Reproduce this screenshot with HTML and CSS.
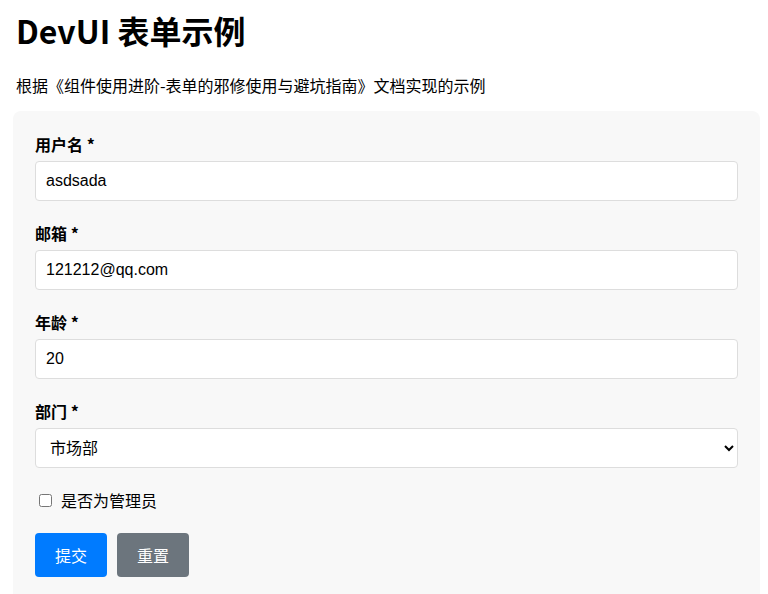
FILE: index.html
```html
<!DOCTYPE html>
<html lang="zh-CN">
<head>
<meta charset="utf-8">
<title>DevUI 表单示例</title>
<link rel="stylesheet" href="styles.css">
</head>
<body>
<div class="page">
  <h1 class="title">DevUI 表单示例</h1>
  <p class="subtitle">根据《组件使用进阶-表单的邪修使用与避坑指南》文档实现的示例</p>
  <form class="form">
    <div class="group">
      <label class="label" for="username">用户名 *</label>
      <input class="control" id="username" type="text" value="asdsada">
    </div>
    <div class="group">
      <label class="label" for="email">邮箱 *</label>
      <input class="control" id="email" type="email" value="121212@qq.com">
    </div>
    <div class="group">
      <label class="label" for="age">年龄 *</label>
      <input class="control" id="age" type="text" value="20">
    </div>
    <div class="group">
      <label class="label" for="dept">部门 *</label>
      <select class="control select" id="dept">
        <option>市场部</option>
        <option>技术部</option>
        <option>销售部</option>
      </select>
    </div>
    <div class="group check-row">
      <input class="check" id="admin" type="checkbox">
      <label class="check-label" for="admin">是否为管理员</label>
    </div>
    <div class="actions">
      <button class="btn btn-primary" type="button">提交</button>
      <button class="btn btn-secondary" type="button">重置</button>
    </div>
  </form>
</div>
</body>
</html>
```
FILE: styles.css
```css
html, body {
  margin: 0;
  padding: 0;
  background: #ffffff;
}

body {
  font-family: "Noto Sans CJK SC", "Liberation Sans", sans-serif;
  color: #000;
}

.page {
  padding: 10px 8px 0 13px;
}

.title {
  margin: 0 0 0 3px;
  font-size: 32px;
  line-height: 40px;
  font-weight: 700;
}

.subtitle {
  margin: 23px 0 0 3px;
  font-size: 16px;
  line-height: 24px;
}

.form {
  margin-top: 14px;
  background: #f8f8f8;
  border-radius: 8px;
  padding: 21px 22px 30px 22px;
}

.group {
  margin-bottom: 20px;
}

.label {
  display: block;
  font-size: 16px;
  line-height: 24px;
  font-weight: 700;
  margin-bottom: 5px;
}

.control {
  display: block;
  box-sizing: border-box;
  width: 100%;
  height: 40px;
  padding: 10px;
  border: 1px solid #dddddd;
  border-radius: 4px;
  background: #fff;
  font-family: "Liberation Sans", "Noto Sans CJK SC", sans-serif;
  font-size: 16px;
  color: #000;
}

.select {
  padding: 0 10px;
}

.check-row {
  display: flex;
  align-items: center;
  height: 24px;
  margin-bottom: 21px;
}

.check {
  width: 13px;
  height: 13px;
  margin: 0 9px 0 4px;
}

.check-label {
  font-size: 16px;
  line-height: 24px;
}

.actions {
  display: flex;
  gap: 10px;
}

.btn {
  border: none;
  border-radius: 4px;
  padding: 10px 20px;
  font-family: "Noto Sans CJK SC", sans-serif;
  font-size: 16px;
  line-height: 24px;
  color: #fff;
  cursor: pointer;
}

.btn-primary {
  background: #007bff;
}

.btn-secondary {
  background: #6c757d;
}
```
